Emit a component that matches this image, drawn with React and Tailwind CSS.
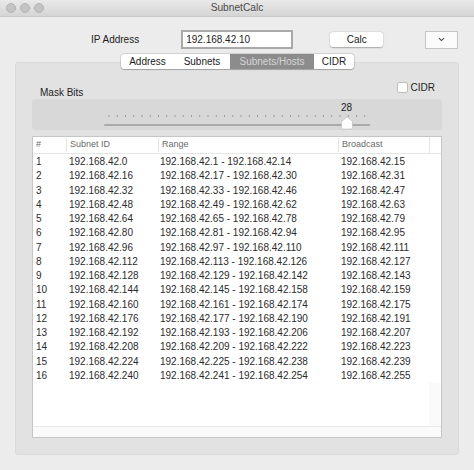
import React from "react";

const subnets = Array.from({ length: 16 }, (_, i) => {
  const base = i * 16;
  return {
    id: i + 1,
    subnet: `192.168.42.${base}`,
    range: `192.168.42.${base + 1} - 192.168.42.${base + 14}`,
    broadcast: `192.168.42.${base + 15}`,
  };
});

const tabs = [
  { label: "Address", w: "w-[53px]" },
  { label: "Subnets", w: "w-[56px]" },
  { label: "Subnets/Hosts", w: "w-[84px]", active: true },
  { label: "CIDR", w: "w-[40px]" },
];

function TitleBar() {
  return (
    <div className="grid h-[17px] grid-cols-[1fr_auto_1fr] items-center border-b border-[#c9c9c9] bg-gradient-to-b from-[#e9e9e9] to-[#d5d5d5]">
      <div className="flex items-center gap-[4px] pl-[6px]">
        {[0, 1, 2].map((i) => (
          <span
            key={i}
            className="h-[10px] w-[10px] rounded-full border border-[#b3b3b3] bg-[#c4c4c4]"
          />
        ))}
      </div>
      <span className="text-[10.2px] leading-none text-[#4a4a4a]">SubnetCalc</span>
      <div />
    </div>
  );
}

function MaskSlider({ value }) {
  // ticks for 0..32 bits across the track
  const ticks = Array.from({ length: 32 }, (_, i) => 5 + i * 8.25);
  const thumbX = 243;
  return (
    <div className="mt-[1px] h-[31px] rounded-[3px] bg-[#d8d8d8] pl-[72px]">
      <div className="relative w-[266px]">
        <div className="pt-[3px] text-[10px] leading-[12px] text-[#222]" style={{ paddingLeft: thumbX - 6 }}>
          {value}
        </div>
        <svg width="266" height="16" className="block">
          {ticks.map((x) => (
            <line key={x} x1={x} x2={x} y1="1" y2="3" stroke="#9a9a9a" strokeWidth="1" />
          ))}
          <rect x="0" y="10" width="266" height="2" rx="1" fill="#a9a9a9" />
          <path
            d={`M${thumbX - 5.5} 7.5 L${thumbX} 3 L${thumbX + 5.5} 7.5 V13.5 Q${thumbX + 5.5} 15 ${thumbX + 4} 15 H${thumbX - 4} Q${thumbX - 5.5} 15 ${thumbX - 5.5} 13.5 Z`}
            fill="#ffffff"
            stroke="#b9b9b9"
            strokeWidth="0.6"
          />
        </svg>
      </div>
    </div>
  );
}

function SubnetTable() {
  const cols = "grid grid-cols-[33px_92px_180px_91px_1fr]";
  return (
    <div className="mt-[6px] flex h-[303px] flex-col border border-[#c6c6c6] bg-white">
      <div className={`${cols} h-[17px] items-center border-b border-[#e6e6e6] text-[9px] text-[#6b6b6b]`}>
        <span className="pl-[3px]">#</span>
        <span className="border-l border-[#e3e3e3] pl-[3px]">Subnet ID</span>
        <span className="border-l border-[#e3e3e3] pl-[3px]">Range</span>
        <span className="border-l border-[#e3e3e3] pl-[3px]">Broadcast</span>
        <span className="h-full border-l border-[#e3e3e3]" />
      </div>
      <div className="flex flex-1 flex-col pt-[1px]">
        {subnets.map((row) => (
          <div key={row.id} className={`${cols} h-[14.25px] items-center text-[10px] leading-none text-[#2b2b2b]`}>
            <span className="pl-[3px]">{row.id}</span>
            <span className="pl-[3px]">{row.subnet}</span>
            <span className="pl-[2px]">{row.range}</span>
            <span className="pl-[3px]">{row.broadcast}</span>
            <span />
          </div>
        ))}
        <div className="flex-1 border-r-[12px] border-[#fafafa]" />
      </div>
      <div className="h-[11px] border-t border-[#e8e8e8] bg-[#fafafa]" />
    </div>
  );
}

export default function App() {
  return (
    <div className="flex h-[470px] w-[474px] flex-col bg-[#ececec] font-['Liberation_Sans',Arial,sans-serif] text-[#222]">
      <TitleBar />

      {/* address input row */}
      <div className="mt-[13px] flex h-[19px] items-center">
        <span className="pl-[91px] text-[10px]">IP Address</span>
        <div className="ml-[42px] flex h-[19px] w-[112px] items-center border-2 border-[#a9a9a9] bg-white pl-[3px] text-[10px]">
          192.168.42.10
        </div>
        <button className="ml-[37px] h-[15px] w-[53px] rounded-[3px] bg-white text-[10px] leading-none shadow-[0_0.5px_1.5px_rgba(0,0,0,0.3)]">
          Calc
        </button>
        <button className="ml-[42px] flex h-[18px] w-[33px] items-center justify-center border border-[#c4c4c4] bg-[#fbfbfb]">
          <svg width="7" height="5" viewBox="0 0 7 5">
            <path d="M1 1.2 L3.5 3.6 L6 1.2" fill="none" stroke="#444" strokeWidth="1.1" />
          </svg>
        </button>
      </div>

      {/* tab strip sits on top of the panel edge */}
      <div className="relative z-10 mt-[5px] flex justify-center pl-[1px]">
        <div className="flex h-[15px] overflow-hidden rounded-[3px] bg-white shadow-[0_0_0_0.5px_rgba(0,0,0,0.2),0_0.5px_1px_rgba(0,0,0,0.2)]">
          {tabs.map((t) => (
            <div
              key={t.label}
              className={`${t.w} flex items-center justify-center text-[10px] leading-none ${
                t.active ? "bg-[#8c8c8c] text-[#d4d4d4]" : "text-[#222]"
              }`}
            >
              {t.label}
            </div>
          ))}
        </div>
      </div>

      <div className="mx-[15px] -mt-[7px] flex h-[393px] flex-col rounded-[3px] border border-[#dadada] bg-[#e2e2e2] px-[16px] pb-[16px] pt-[19px]">
        <div className="flex h-[16px] justify-between">
          <span className="self-end pl-[8px] text-[10px] leading-[10px]">Mask Bits</span>
          <label className="flex items-center gap-[3px] self-start pr-[7px] text-[10px] leading-[11px]">
            <span className="h-[11px] w-[11px] rounded-[2px] border border-[#bdbdbd] bg-white" />
            CIDR
          </label>
        </div>
        <MaskSlider value={28} />
        <SubnetTable />
      </div>
    </div>
  );
}
